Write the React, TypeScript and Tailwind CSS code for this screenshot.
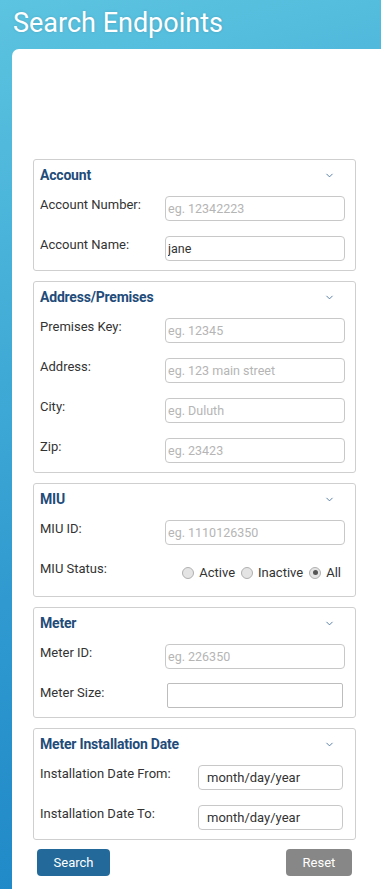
import { ChevronDown } from 'lucide-react';

const font = { fontFamily: 'Roboto, "Liberation Sans", sans-serif' };

function Section({ title, children }: { title: string; children: React.ReactNode }) {
  return (
    <div className="border border-[#cfcfcf] rounded-[3px] pl-[6px] pr-[10px]">
      <div className="h-[30px] flex items-center justify-between">
        <span className="text-[14px] font-bold text-[#1f4c7a] tracking-[-0.2px]">{title}</span>
        <ChevronDown className="w-[11px] h-[11px] text-[#4d74a0] mr-[10px]" strokeWidth={2} />
      </div>
      {children}
    </div>
  );
}

function Row({
  label,
  placeholder,
  value,
}: {
  label: string;
  placeholder?: string;
  value?: string;
}) {
  return (
    <div className="flex items-start h-[40px]">
      <label className="text-[13px] text-[#333] pt-[6px] leading-[18px]">{label}</label>
      <input
        className="w-[180px] ml-auto mt-[6px] h-[25px] border border-[#c8c8c8] rounded-[4px] px-[2px] text-[12.5px] text-[#333] placeholder:text-[#b5b5b5] outline-none"
        placeholder={placeholder}
        defaultValue={value}
      />
    </div>
  );
}

function DateRow({ label }: { label: string }) {
  return (
    <div className="flex items-start h-[40px]">
      <label className="text-[13px] text-[#333] pt-[6px] leading-[18px]">{label}</label>
      <div className="ml-auto mr-[2px] mt-[6px] w-[145px] h-[25px] border border-[#c8c8c8] rounded-[4px] pl-[8px] flex items-center text-[13px] text-[#333]">
        month/day/year
      </div>
    </div>
  );
}

function Radio({ label, checked }: { label: string; checked?: boolean }) {
  return (
    <span className="flex items-center gap-[5px]">
      <span className="w-[12px] h-[12px] rounded-full border border-[#b0b0b0] bg-[#e4e4e4] flex items-center justify-center">
        {checked && <span className="w-[5px] h-[5px] rounded-full bg-[#555]" />}
      </span>
      <span className="text-[13px] text-[#333]">{label}</span>
    </span>
  );
}

export default function App() {
  return (
    <div
      className="min-h-[889px] flex flex-col pl-[12px] bg-[linear-gradient(165deg,#5cc4e0_0%,#45afd8_30%,#2d97cf_65%,#1b84c5_100%)]"
      style={font}
    >
      <h1 className="h-[49px] pt-[5px] pl-[1px] text-[27px] leading-[37px] text-white [text-shadow:0_0_3px_rgba(0,0,0,0.15)]">
        Search Endpoints
      </h1>
      <div className="flex-1 bg-white rounded-tl-[7px] pt-[110px] pl-[21px] pr-[25px]">
        <div className="flex flex-col gap-[10px]">
          <Section title="Account">
            <Row label="Account Number:" placeholder="eg. 12342223" />
            <Row label="Account Name:" value="jane" />
          </Section>

          <Section title="Address/Premises">
            <Row label="Premises Key:" placeholder="eg. 12345" />
            <Row label="Address:" placeholder="eg. 123 main street" />
            <Row label="City:" placeholder="eg. Duluth" />
            <Row label="Zip:" placeholder="eg. 23423" />
          </Section>

          <Section title="MIU">
            <Row label="MIU ID:" placeholder="eg. 1110126350" />
            <div className="flex items-start h-[42px]">
              <label className="text-[13px] text-[#333] pt-[6px] leading-[18px]">MIU Status:</label>
              <div className="ml-auto mt-[9px] mr-[4px] flex items-center gap-[6px]">
                <Radio label="Active" />
                <Radio label="Inactive" />
                <Radio label="All" checked />
              </div>
            </div>
          </Section>

          <Section title="Meter">
            <Row label="Meter ID:" placeholder="eg. 226350" />
            <div className="flex items-start h-[39px]">
              <label className="text-[13px] text-[#333] pt-[6px] leading-[18px]">Meter Size:</label>
              <div className="ml-auto mr-[2px] mt-[5px] w-[176px] h-[25px] border border-[#bdbdbd] rounded-[2px]" />
            </div>
          </Section>

          <Section title="Meter Installation Date">
            <DateRow label="Installation Date From:" />
            <DateRow label="Installation Date To:" />
          </Section>
        </div>

        <div className="flex justify-between px-[4px] pt-[9px]">
          <button className="w-[73px] h-[27px] rounded-[4px] bg-[#23699a] text-white text-[13px]">Search</button>
          <button className="w-[66px] h-[27px] rounded-[4px] bg-[#878787] text-white text-[13px]">Reset</button>
        </div>
      </div>
    </div>
  );
}
